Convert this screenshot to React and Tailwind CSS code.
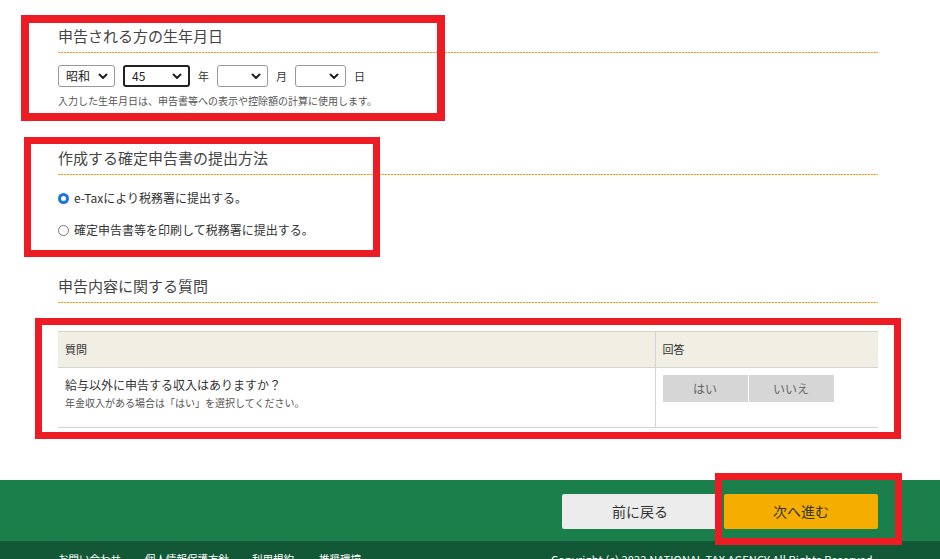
import { useState } from 'react';

const font = { fontFamily: '"Noto Sans CJK JP", "Noto Sans", sans-serif' };

const Chevron = () => (
    <svg width="10" height="7" viewBox="0 0 10 7" className="shrink-0">
        <path d="M1.5 1.5 L5 5 L8.5 1.5" fill="none" stroke="#222" strokeWidth="2" strokeLinecap="round" strokeLinejoin="round" />
    </svg>
);

const FakeSelect = ({ value, width, focused }) => (
    <div
        className={`flex items-center justify-between h-[22px] pl-[7px] pr-[6px] bg-white rounded-[3px] text-[12px] text-[#222] ${focused ? 'border-2 border-[#222]' : 'border border-[#9a9a9a]'
            } ${width}`}
    >
        <span>{value}</span>
        <Chevron />
    </div>
);

const SectionTitle = ({ children }) => (
    <div>
        <h2 className="text-[15px] leading-[20px] text-[#444] pb-[6px]">{children}</h2>
        <div className="h-[1px] bg-[repeating-linear-gradient(90deg,#f0a030_0px,#f0a030_2px,#fbd9a6_2px,#fbd9a6_3px)]" />
    </div>
);

const Radio = ({ checked, label, onClick }) => (
    <label onClick={onClick} className="flex items-center gap-[5px] text-[12px] text-[#333] cursor-pointer">
        {checked ? (
            <span className="w-[11px] h-[11px] rounded-full bg-[#1a73e8] flex items-center justify-center">
                <span className="w-[5px] h-[5px] rounded-full bg-white" />
            </span>
        ) : (
            <span className="w-[11px] h-[11px] rounded-full border border-[#767676] bg-white" />
        )}
        <span>{label}</span>
    </label>
);

export default function App() {
    const [method, setMethod] = useState('etax');

    return (
        <div className="relative bg-white min-h-screen" style={font}>
            {/* Form */}
            <div className="ml-[58px] w-[820px] pt-[26px]">
                {/* 生年月日 */}
                <SectionTitle>申告される方の生年月日</SectionTitle>
                <div className="flex items-center mt-[12px] text-[11px] text-[#333]">
                    <FakeSelect value="昭和" width="w-[57px]" />
                    <div className="w-[8px]" />
                    <FakeSelect value="45" width="w-[67px]" focused />
                    <span className="mx-[8px]">年</span>
                    <FakeSelect value="" width="w-[51px]" />
                    <span className="mx-[8px]">月</span>
                    <FakeSelect value="" width="w-[51px]" />
                    <span className="ml-[8px]">日</span>
                </div>
                <p className="mt-[7px] text-[10px] leading-[14px] text-[#555]">
                    入力した生年月日は、申告書等への表示や控除額の計算に使用します。
                </p>

                {/* 提出方法 */}
                <div className="mt-[40px]">
                    <SectionTitle>作成する確定申告書の提出方法</SectionTitle>
                    <div className="flex flex-col gap-[14px] mt-[14px]">
                        <Radio checked={method === 'etax'} label="e-Taxにより税務署に提出する。" onClick={() => setMethod('etax')} />
                        <Radio checked={method === 'print'} label="確定申告書等を印刷して税務署に提出する。" onClick={() => setMethod('print')} />
                    </div>
                </div>

                {/* 質問 */}
                <div className="mt-[37px]">
                    <SectionTitle>申告内容に関する質問</SectionTitle>
                    <table className="w-full mt-[28px] border-collapse text-[#333]">
                        <thead>
                            <tr className="bg-[#f1eee4] border-t border-b border-[#d4d4d4]">
                                <th className="text-left font-normal text-[11px] h-[36px] px-[7px] w-[597px] border-r border-[#d4d4d4]">質問</th>
                                <th className="text-left font-normal text-[11px] h-[36px] px-[7px]">回答</th>
                            </tr>
                        </thead>
                        <tbody>
                            <tr className="border-b border-[#d4d4d4]">
                                <td className="align-top px-[7px] pt-[8px] pb-[17px] border-r border-[#d4d4d4]">
                                    <div className="text-[12px] leading-[17px]">給与以外に申告する収入はありますか？</div>
                                    <div className="text-[10px] leading-[14px] text-[#555] mt-[3px]">年金収入がある場合は「はい」を選択してください。</div>
                                </td>
                                <td className="align-top px-[7px] pt-[7px]">
                                    <div className="flex gap-[1px]">
                                        <button className="w-[85px] h-[27px] bg-[#d6d6d6] text-[12px] text-[#666]">はい</button>
                                        <button className="w-[85px] h-[27px] bg-[#d6d6d6] text-[12px] text-[#666]">いいえ</button>
                                    </div>
                                </td>
                            </tr>
                        </tbody>
                    </table>
                </div>
            </div>

            {/* Navigation */}
            <div className="mt-[52px] bg-[#1b7f4b] h-[61px] flex justify-end items-start pt-[14px] pr-[62px] gap-[6px]">
                <button className="w-[156px] h-[35px] bg-[#ececec] rounded-[2px] text-[14px] text-[#333]">前に戻る</button>
                <button className="w-[154px] h-[35px] bg-[#f5ad00] rounded-[2px] text-[14px] text-[#333]">次へ進む</button>
            </div>

            {/* Footer */}
            <div className="bg-[#125736] h-[50px] flex items-start pt-[10px] pl-[58px] pr-[64px] text-white">
                <div className="flex text-[10.5px]">
                    <a className="w-[87px]">お問い合わせ</a>
                    <a className="w-[107px]">個人情報保護方針</a>
                    <a className="w-[67px]">利用規約</a>
                    <a>推奨環境</a>
                </div>
                <div className="ml-auto text-[11px] tracking-[0.15px]">Copyright (c) 2022 NATIONAL TAX AGENCY All Rights Reserved.</div>
            </div>

            {/* Annotation boxes */}
            <div className="absolute left-[21px] top-[15px] w-[424px] h-[106px] border-[8px] border-[#ed1c24] pointer-events-none" />
            <div className="absolute left-[24px] top-[137px] w-[356px] h-[120px] border-[7px] border-[#ed1c24] pointer-events-none" />
            <div className="absolute left-[35px] top-[318px] w-[866px] h-[121px] border-[7px] border-[#ed1c24] pointer-events-none" />
            <div className="absolute left-[715px] top-[473px] w-[187px] h-[72px] border-[7px] border-[#ed1c24] pointer-events-none" />
        </div>
    );
}
